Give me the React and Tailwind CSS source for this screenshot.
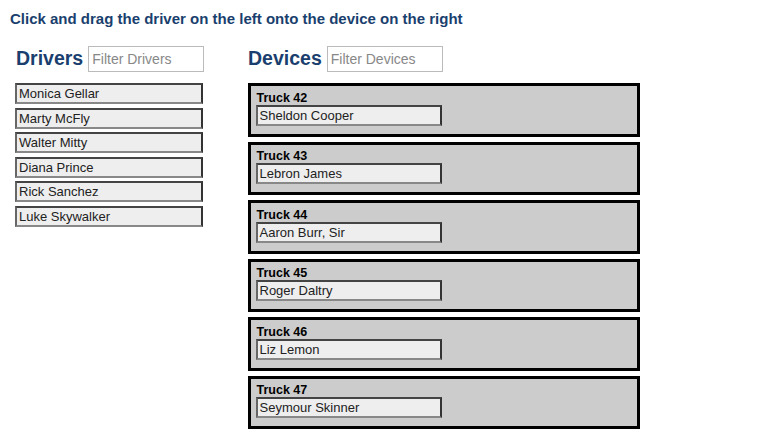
import React, { useState } from 'react';

const drivers = ['Monica Gellar', 'Marty McFly', 'Walter Mitty', 'Diana Prince', 'Rick Sanchez', 'Luke Skywalker'];

const devices = [
  { id: 42, driver: 'Sheldon Cooper' },
  { id: 43, driver: 'Lebron James' },
  { id: 44, driver: 'Aaron Burr, Sir' },
  { id: 45, driver: 'Roger Daltry' },
  { id: 46, driver: 'Liz Lemon' },
  { id: 47, driver: 'Seymour Skinner' },
];

const DriverChip = ({ name, className = '' }) => (
  <div
    className={`h-[21px] bg-[#eeeeee] border-2 border-t-[#444] border-l-[#666] border-r-[#333] border-b-[#888] px-[2px] text-[13px] leading-[17px] text-[#222] ${className}`}
  >
    {name}
  </div>
);

const App = () => {
  const [driverFilter, setDriverFilter] = useState('');
  const [deviceFilter, setDeviceFilter] = useState('');

  return (
    <div className="pt-[10px] pl-[10px] font-['Liberation_Sans',Arial,sans-serif] bg-white min-h-[432px]">
      <h1 className="text-[15px] leading-[18px] font-bold text-[#1a3f6e]">
        Click and drag the driver on the left onto the device on the right
      </h1>

      <div className="flex mt-[18px]">
        {/* drivers */}
        <div className="w-[238px] pl-[5px]">
          <div className="flex items-center h-[26px]">
            <h2 className="text-[19.5px] font-bold text-[#1a3f6e] pl-[1px]">Drivers</h2>
            <input
              className="ml-[5px] w-[116px] h-[26px] border border-[#bbb] px-[3px] text-[14px] placeholder:text-[#888] outline-none"
              placeholder="Filter Drivers"
              value={driverFilter}
              onChange={(e) => setDriverFilter(e.target.value)}
            />
          </div>
          <div className="flex flex-col gap-[3.5px] mt-[11px] w-[188px]">
            {drivers.map((d) => (
              <DriverChip key={d} name={d} />
            ))}
          </div>
        </div>

        {/* devices */}
        <div className="w-[392px]">
          <div className="flex items-center h-[26px]">
            <h2 className="text-[19.5px] font-bold text-[#1a3f6e]">Devices</h2>
            <input
              className="ml-[5px] w-[116px] h-[26px] border border-[#bbb] px-[3px] text-[14px] placeholder:text-[#888] outline-none"
              placeholder="Filter Devices"
              value={deviceFilter}
              onChange={(e) => setDeviceFilter(e.target.value)}
            />
          </div>
          <div className="flex flex-col gap-[5px] mt-[11px]">
            {devices.map((dev) => (
              <div key={dev.id} className="border-[3px] border-black bg-[#cccccc] pl-[4.5px] pt-[4.5px] pb-[8px]">
                <div className="text-[12.5px] leading-[14px] font-bold text-black pl-[1px]">Truck {dev.id}</div>
                <DriverChip name={dev.driver} className="w-[186px]" />
              </div>
            ))}
          </div>
        </div>
      </div>
    </div>
  );
};

export default App;
